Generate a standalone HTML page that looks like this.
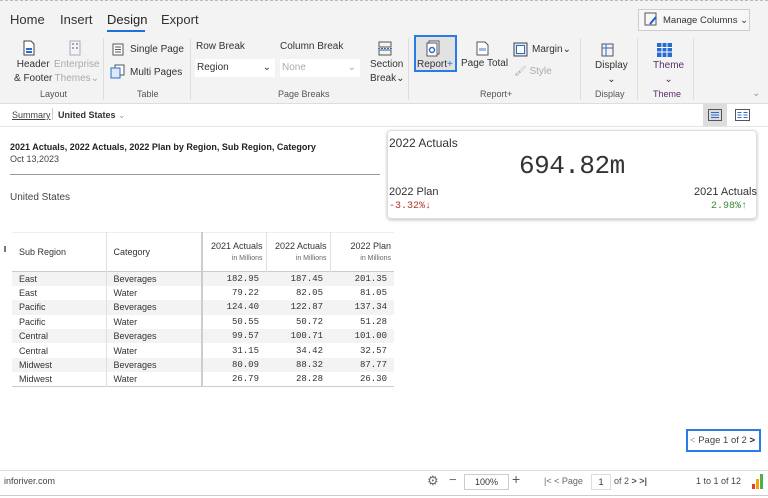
<!DOCTYPE html>
<html><head><meta charset="utf-8"><style>
*{box-sizing:border-box;margin:0;padding:0}
body{width:768px;height:498px;overflow:hidden;background:#fff;font-family:"Liberation Sans",sans-serif;color:#333;position:relative;font-size:10px}
.a{position:absolute;white-space:nowrap}
.rib{position:absolute;left:0;top:0;width:768px;height:103px;background:#f3f3f3;border-top:1px dashed #bbb}
.sep{position:absolute;width:1px;background:#ddd;top:38px;height:62px}
.gl{position:absolute;top:89px;font-size:9px;color:#555}
.mono{font-family:"Liberation Mono",monospace}
table{border-collapse:collapse;position:absolute;left:12px;top:232px;font-size:9px}
td{height:14.4px;padding:0 7px}
.n{text-align:right;font-family:"Liberation Mono",monospace;font-size:9px}
</style></head><body>
<div class="rib"></div>
<div class="a" style="left:10px;top:12px;font-size:13px;color:#333">Home</div>
<div class="a" style="left:60px;top:12px;font-size:13px">Insert</div>
<div class="a" style="left:107px;top:12px;font-size:13px;color:#222">Design</div>
<div class="a" style="left:107px;top:30px;width:38px;height:2px;background:#1a73d9"></div>
<div class="a" style="left:161px;top:12px;font-size:13px">Export</div>
<div class="a" style="left:638px;top:9px;width:112px;height:22px;border:1px solid #ccc;background:#f7f7f7;font-size:9.5px;padding:5px 0 0 24px">Manage Columns ⌄</div>
<svg class="a" style="left:644px;top:12px" width="14" height="14"><rect x="1" y="1" width="11" height="12" fill="none" stroke="#555"/><path d="M6 12 L12 5" stroke="#1a5fd6" stroke-width="2"/></svg>
<svg class="a" style="left:22px;top:40px" width="14" height="16"><path d="M2 1h7l3 3v11H2z" fill="#fff" stroke="#444"/><rect x="4" y="8" width="6" height="2" fill="#2a6bd1"/><rect x="4" y="11" width="6" height="2" fill="#2a6bd1"/></svg>
<div class="a" style="left:14px;top:58px;line-height:14px;text-align:center;font-size:10px">Header<br>&amp; Footer</div>
<svg class="a" style="left:68px;top:40px" width="14" height="16"><rect x="2" y="1" width="10" height="14" fill="none" stroke="#aab"/><rect x="4" y="3" width="2" height="2" fill="#9ab"/><rect x="8" y="3" width="2" height="2" fill="#9ab"/><rect x="4" y="7" width="2" height="2" fill="#9ab"/><rect x="8" y="7" width="2" height="2" fill="#9ab"/></svg>
<div class="a" style="left:54px;top:58px;line-height:14px;text-align:center;color:#aaa;font-size:10px">Enterprise<br>Themes⌄</div>
<div class="gl" style="left:40px">Layout</div>
<div class="sep" style="left:103px"></div>
<svg class="a" style="left:112px;top:43px" width="12" height="13"><rect x="1" y="1" width="10" height="11" fill="#fff" stroke="#555"/><path d="M3 4h6M3 6.5h6M3 9h6" stroke="#555"/></svg>
<div class="a" style="left:130px;top:44px;font-size:10px">Single Page</div>
<svg class="a" style="left:110px;top:64px" width="16" height="15"><rect x="5" y="1" width="9" height="10" fill="#fff" stroke="#555"/><rect x="1" y="4" width="9" height="10" fill="#dfe8f7" stroke="#2a6bd1"/></svg>
<div class="a" style="left:130px;top:67px;font-size:10px">Multi Pages</div>
<div class="gl" style="left:137px">Table</div>
<div class="sep" style="left:190px"></div>
<div class="a" style="left:196px;top:41px;font-size:10px">Row Break</div>
<div class="a" style="left:280px;top:41px;font-size:10px">Column Break</div>
<div class="a" style="left:195px;top:59px;width:80px;height:18px;background:#fff;font-size:10px;padding:3px 0 0 2px">Region<span style="position:absolute;right:4px">⌄</span></div>
<div class="a" style="left:280px;top:59px;width:80px;height:18px;background:#fff;font-size:10px;padding:3px 0 0 2px;color:#aaa">None<span style="position:absolute;right:4px">⌄</span></div>
<div class="gl" style="left:278px">Page Breaks</div>
<svg class="a" style="left:378px;top:41px" width="14" height="15"><rect x="1" y="1" width="12" height="5" fill="none" stroke="#555"/><rect x="1" y="9" width="12" height="5" fill="none" stroke="#555"/><path d="M0 7.5h14" stroke="#2a6bd1" stroke-dasharray="2 1"/></svg>
<div class="a" style="left:370px;top:58px;line-height:14px;font-size:10px">Section<br>Break⌄</div>
<div class="sep" style="left:408px"></div>
<div class="a" style="left:414px;top:35px;width:43px;height:37px;border:2px solid #2a7be4;background:#e2e2e2"></div>
<svg class="a" style="left:425px;top:40px" width="16" height="17"><rect x="4" y="1" width="10" height="13" fill="#fff" stroke="#555"/><rect x="2" y="3" width="10" height="13" fill="#fff" stroke="#555"/><circle cx="7" cy="10" r="2.5" fill="none" stroke="#2a6bd1" stroke-width="1.5"/></svg>
<div class="a" style="left:417px;top:59px;font-size:10px">Report<span style="color:#2a6bd1">+</span></div>
<svg class="a" style="left:476px;top:41px" width="13" height="15"><path d="M1 1h8l3 3v10H1z" fill="#fff" stroke="#555"/><rect x="3" y="7" width="7" height="3" fill="#9bbbe8"/></svg>
<div class="a" style="left:461px;top:58px;font-size:10px">Page Total</div>
<svg class="a" style="left:513px;top:42px" width="15" height="15"><rect x="1" y="1" width="13" height="13" fill="#dde6f4" stroke="#444"/><rect x="3.5" y="3.5" width="8" height="8" fill="#fff" stroke="#2a6bd1"/></svg>
<div class="a" style="left:532px;top:44px;font-size:10px">Margin⌄</div>
<div class="a" style="left:514px;top:66px;font-size:10px;color:#aaa">🖌 Style</div>
<div class="gl" style="left:480px">Report+</div>
<div class="sep" style="left:580px"></div>
<svg class="a" style="left:601px;top:43px" width="13" height="14"><rect x="1" y="1" width="11" height="12" fill="none" stroke="#555"/><path d="M1 5h11M5 1v12" stroke="#2a6bd1"/></svg>
<div class="a" style="left:595px;top:59px;font-size:10px;text-align:center;line-height:14px">Display<br>⌄</div>
<div class="gl" style="left:595px">Display</div>
<div class="sep" style="left:637px"></div>
<svg class="a" style="left:657px;top:43px" width="15" height="14"><rect x="0" y="0" width="15" height="14" fill="#2a6bd1"/><path d="M0 4.5h15M0 9h15M5 0v14M10 0v14" stroke="#fff"/></svg>
<div class="a" style="left:653px;top:59px;font-size:10px;text-align:center;line-height:14px;color:#5a2d6a">Theme<br>⌄</div>
<div class="gl" style="left:653px;color:#5a2d6a">Theme</div>
<div class="sep" style="left:693px"></div>
<div class="a" style="left:752px;top:88px;color:#999">⌄</div>
<div class="a" style="left:0;top:103px;width:768px;height:1px;background:#ddd"></div>
<div class="a" style="left:12px;top:110px;font-size:9px;text-decoration:underline;color:#444">Summary</div>
<div class="a" style="left:52px;top:108px;width:1px;height:12px;background:#ccc"></div>
<div class="a" style="left:58px;top:110px;font-size:9px;font-weight:bold;color:#333">United States <span style="font-weight:normal;color:#999">⌄</span></div>
<div class="a" style="left:703px;top:104px;width:24px;height:22px;background:#ddd"></div>
<svg class="a" style="left:708px;top:109px" width="14" height="12"><rect x="0.5" y="0.5" width="13" height="11" fill="none" stroke="#555"/><path d="M3 3.5h8M3 6h8M3 8.5h8" stroke="#2a6bd1"/></svg>
<svg class="a" style="left:735px;top:109px" width="15" height="12"><rect x="0.5" y="0.5" width="14" height="11" fill="none" stroke="#555"/><path d="M2.5 3.5h4M8.5 3.5h4M2.5 6h4M8.5 6h4M2.5 8.5h4M8.5 8.5h4" stroke="#2a6bd1"/></svg>
<div class="a" style="left:0;top:126px;width:768px;height:1px;background:#e5e5e5"></div>
<div class="a" style="left:10px;top:142px;font-size:9px;font-weight:bold;color:#222">2021 Actuals, 2022 Actuals, 2022 Plan by Region, Sub Region, Category</div>
<div class="a" style="left:10px;top:154px;font-size:9px;color:#444">Oct 13,2023</div>
<div class="a" style="left:10px;top:174px;width:370px;height:1px;background:#999"></div>
<div class="a" style="left:10px;top:192px;font-size:10px;color:#444">United States</div>
<div class="a" style="left:387px;top:130px;width:370px;height:89px;border:1px solid #ddd;border-radius:4px;box-shadow:0 1px 3px rgba(0,0,0,.25)"></div>
<div class="a" style="left:389px;top:136px;font-size:12px;color:#333">2022 Actuals</div>
<div class="a mono" style="left:519px;top:151px;font-size:26px;letter-spacing:-0.5px;color:#333">694.82m</div>
<div class="a" style="left:389px;top:186px;font-size:11px">2022 Plan</div>
<div class="a mono" style="left:389px;top:201px;font-size:10px;color:#b03a2e">-3.32%<b>↓</b></div>
<div class="a" style="left:694px;top:186px;font-size:11px">2021 Actuals</div>
<div class="a mono" style="left:711px;top:201px;font-size:10px;color:#3a8a3a">2.98%<b>↑</b></div>
<div class="a" style="left:4px;top:246px;width:2px;height:6px;background:#777"></div>
<table>
<tr style="height:39px;border-bottom:1px solid #ccc;border-top:1px solid #eee">
<td style="width:94px;border-right:1px solid #e0e0e0">Sub Region</td>
<td style="width:96px;border-right:2px solid #ccc">Category</td>
<td style="width:64px;text-align:right;padding:0 3px;border-right:1px solid #e0e0e0;line-height:11px">2021 Actuals<br><span style="font-size:7px;color:#666">in Millions</span></td>
<td style="width:64px;text-align:right;padding:0 3px;border-right:1px solid #e0e0e0;line-height:11px">2022 Actuals<br><span style="font-size:7px;color:#666">in Millions</span></td>
<td style="width:64px;text-align:right;padding:0 3px;line-height:11px">2022 Plan<br><span style="font-size:7px;color:#666">in Millions</span></td></tr>
<tr style="background:#f3f3f3"><td style="border-right:1px solid #e0e0e0">East</td><td style="border-right:2px solid #ccc">Beverages</td><td class="n">182.95</td><td class="n">187.45</td><td class="n">201.35</td></tr>
<tr><td style="border-right:1px solid #e0e0e0">East</td><td style="border-right:2px solid #ccc">Water</td><td class="n">79.22</td><td class="n">82.05</td><td class="n">81.05</td></tr>
<tr style="background:#f3f3f3"><td style="border-right:1px solid #e0e0e0">Pacific</td><td style="border-right:2px solid #ccc">Beverages</td><td class="n">124.40</td><td class="n">122.87</td><td class="n">137.34</td></tr>
<tr><td style="border-right:1px solid #e0e0e0">Pacific</td><td style="border-right:2px solid #ccc">Water</td><td class="n">50.55</td><td class="n">50.72</td><td class="n">51.28</td></tr>
<tr style="background:#f3f3f3"><td style="border-right:1px solid #e0e0e0">Central</td><td style="border-right:2px solid #ccc">Beverages</td><td class="n">99.57</td><td class="n">100.71</td><td class="n">101.00</td></tr>
<tr><td style="border-right:1px solid #e0e0e0">Central</td><td style="border-right:2px solid #ccc">Water</td><td class="n">31.15</td><td class="n">34.42</td><td class="n">32.57</td></tr>
<tr style="background:#f3f3f3"><td style="border-right:1px solid #e0e0e0">Midwest</td><td style="border-right:2px solid #ccc">Beverages</td><td class="n">80.09</td><td class="n">88.32</td><td class="n">87.77</td></tr>
<tr style="border-bottom:1px solid #ccc"><td style="border-right:1px solid #e0e0e0">Midwest</td><td style="border-right:2px solid #ccc">Water</td><td class="n">26.79</td><td class="n">28.28</td><td class="n">26.30</td></tr>
</table>
<div class="a" style="left:686px;top:429px;width:75px;height:23px;border:2px solid #2a7be4;font-size:9.5px;padding:4px 0 0 2px;color:#444"><span style="color:#999">&lt;</span> Page 1 of 2 <b style="color:#222">&gt;</b></div>
<div class="a" style="left:0;top:470px;width:768px;height:1px;background:#ddd"></div>
<div class="a" style="left:4px;top:476px;font-size:9px;color:#444">inforiver.com</div>
<div class="a" style="left:427px;top:473px;font-size:13px;color:#666">⚙</div>
<div class="a" style="left:449px;top:472px;font-size:13px;color:#666">−</div>
<div class="a" style="left:464px;top:474px;width:45px;height:16px;border:1px solid #ccc;font-size:9px;text-align:center;padding-top:2px">100%</div>
<div class="a" style="left:512px;top:471px;font-size:14px;color:#555">+</div>
<div class="a" style="left:544px;top:476px;font-size:9px;color:#666">|&lt; &lt; Page</div>
<div class="a" style="left:591px;top:474px;width:20px;height:16px;border:1px solid #ddd;font-size:9px;text-align:center;padding-top:2px">1</div>
<div class="a" style="left:614px;top:476px;font-size:9px;color:#555">of 2 <b>&gt; &gt;|</b></div>
<div class="a" style="left:696px;top:476px;font-size:9px;color:#444">1 to 1 of 12</div>
<div class="a" style="left:752px;top:484px;width:3px;height:5px;background:#e53935"></div>
<div class="a" style="left:756px;top:479px;width:3px;height:10px;background:#f4a300"></div>
<div class="a" style="left:760px;top:474px;width:3px;height:15px;background:#4caf50"></div>
<div class="a" style="left:0;top:495px;width:768px;height:1px;background:#ccc"></div>
</body></html>
